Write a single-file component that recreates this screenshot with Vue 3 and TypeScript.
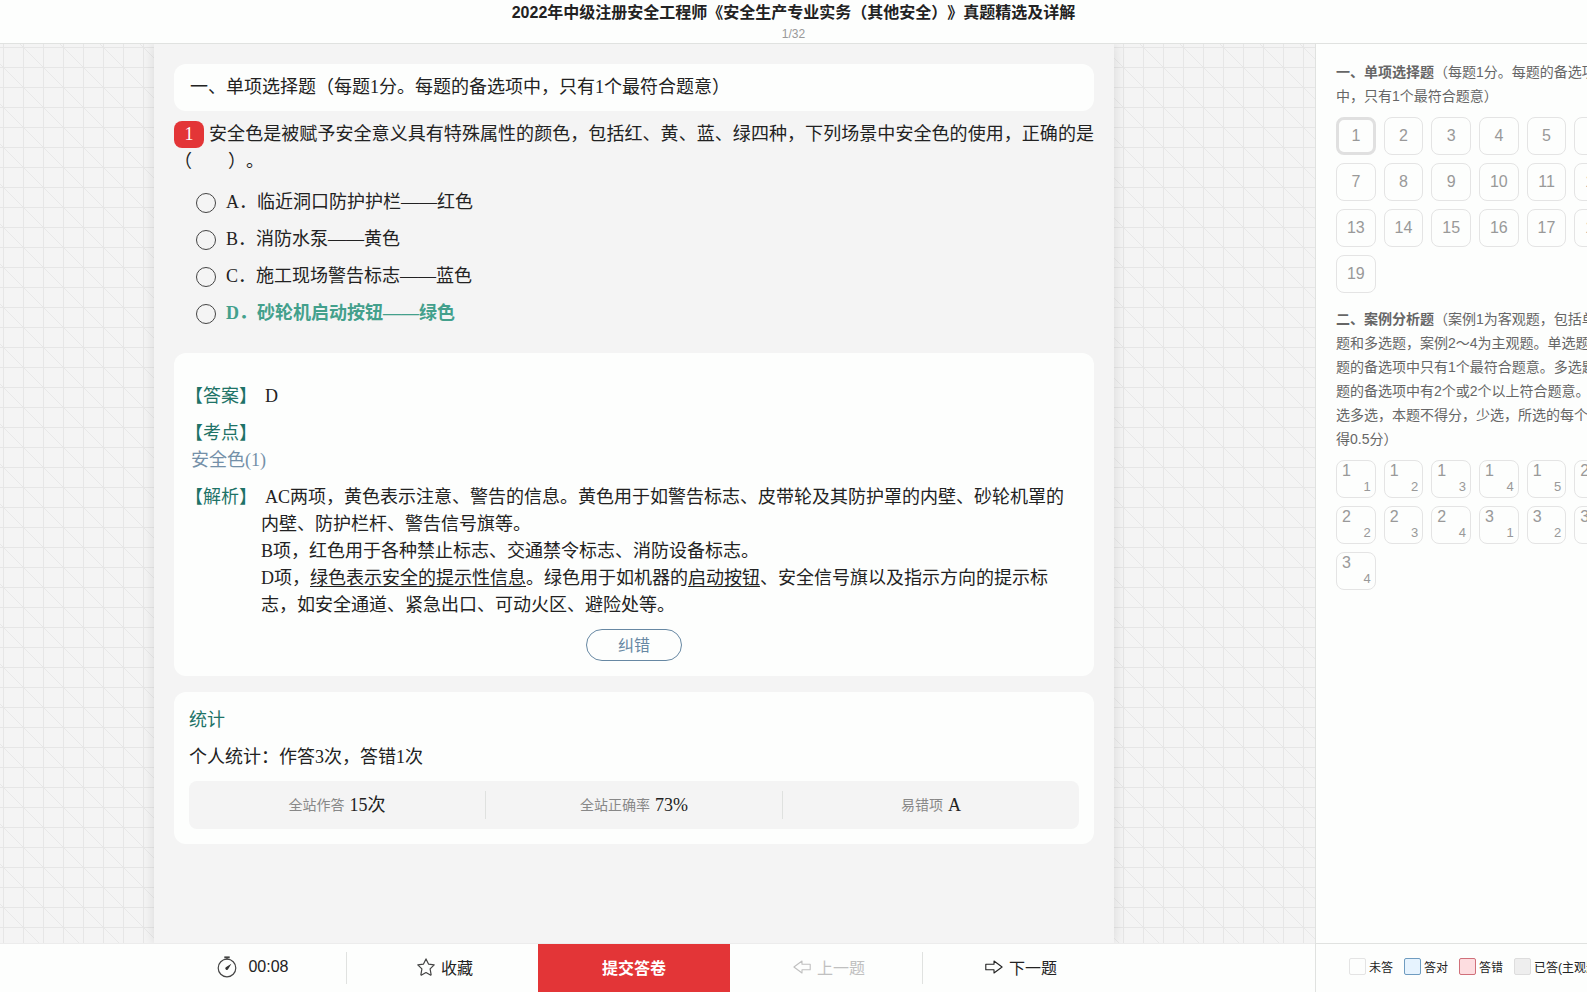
<script setup lang="ts">
import { ref } from 'vue'

interface Option { key: string; text: string; correct: boolean }

const options: Option[] = [
  { key: 'A', text: '临近洞口防护护栏——红色', correct: false },
  { key: 'B', text: '消防水泵——黄色', correct: false },
  { key: 'C', text: '施工现场警告标志——蓝色', correct: false },
  { key: 'D', text: '砂轮机启动按钮——绿色', correct: true },
]
const picked = ref<string>('')

const stats = [
  { label: '全站作答', value: '15次' },
  { label: '全站正确率', value: '73%' },
  { label: '易错项', value: 'A' },
]

const single: number[] = Array.from({ length: 19 }, (_, i) => i + 1)
const current = ref<number>(1)

const cases: [number, number][] = [
  [1, 1], [1, 2], [1, 3], [1, 4], [1, 5], [2, 1],
  [2, 2], [2, 3], [2, 4], [3, 1], [3, 2], [3, 3],
  [3, 4],
]

const legend = [
  { name: '未答', kind: 'none' },
  { name: '答对', kind: 'right' },
  { name: '答错', kind: 'wrong' },
  { name: '已答(主观题)', kind: 'done' },
]
</script>

<template>
  <div class="page">
    <header class="top">
      <h1>2022年中级注册安全工程师《安全生产专业实务（其他安全）》真题精选及详解</h1>
      <span class="progress">1/32</span>
    </header>

    <div class="body">
      <div class="left">
        <div class="canvas">
          <main class="sheet">
            <h2 class="card heading">一、单项选择题（每题1分。每题的备选项中，只有1个最符合题意）</h2>

            <p class="question"><span class="badge">1</span>安全色是被赋予安全意义具有特殊属性的颜色，包括红、黄、蓝、绿四种，下列场景中安全色的使用，正确的是（　　）。</p>

            <div class="options" role="radiogroup" aria-label="选项">
              <label v-for="o in options" :key="o.key" class="option" :class="{ correct: o.correct }">
                <input v-model="picked" type="radio" name="answer" :value="o.key">
                <span>{{ o.key }}．{{ o.text }}</span>
              </label>
            </div>

            <section class="card answer">
              <div class="row"><span class="tag">【答案】</span><span class="first">D</span></div>
              <div class="row"><span class="tag">【考点】</span></div>
              <a class="point" href="#point">安全色(1)</a>
              <div class="row">
                <span class="tag">【解析】</span>
                <div class="explain">
                  <p class="lead">AC两项，黄色表示注意、警告的信息。黄色用于如警告标志、皮带轮及其防护罩的内壁、砂轮机罩的内壁、防护栏杆、警告信号旗等。</p>
                  <p>B项，红色用于各种禁止标志、交通禁令标志、消防设备标志。</p>
                  <p>D项，<u>绿色表示安全的提示性信息</u>。绿色用于如机器的<u>启动按钮</u>、安全信号旗以及指示方向的提示标志，如安全通道、紧急出口、可动火区、避险处等。</p>
                </div>
              </div>
              <button class="fix" type="button">纠错</button>
            </section>

            <section class="card stat">
              <h3>统计</h3>
              <p>个人统计：作答3次，答错1次</p>
              <div class="figures">
                <div v-for="s in stats" :key="s.label" class="figure">
                  <span class="name">{{ s.label }}</span>
                  <span>{{ s.value }}</span>
                </div>
              </div>
            </section>
          </main>
        </div>

        <footer class="bar">
          <div class="actions">
            <div class="action timer">
              <svg width="20" height="22" viewBox="0 0 20 22" fill="none" stroke="#444" stroke-width="1.2">
                <circle cx="10" cy="12" r="8.8" />
                <path d="M7.3 1.4h5.4" stroke-width="2" />
                <path d="M10 1.5v2" />
                <path d="M14.4 7.8 11.2 13a1.5 1.5 0 1 1-2-2z" fill="#333" stroke="none" />
              </svg>
              <span>00:08</span>
            </div>
            <button class="action line" type="button">
              <svg width="18" height="18" viewBox="0 0 18 18" fill="none" stroke="#444" stroke-width="1.2" stroke-linejoin="round">
                <path d="m9 .9 2.5 5.2 5.7.8-4.1 4 1 5.7a.5.5 0 0 1-.7.5L9 14.6l-4.4 2.5a.5.5 0 0 1-.7-.5l1-5.7-4.1-4 5.7-.8z" />
              </svg>
              <span>收藏</span>
            </button>
            <button class="action submit" type="button">提交答卷</button>
            <button class="action" type="button" disabled>
              <svg width="18" height="14" viewBox="0 0 18 14" fill="none" stroke="currentColor" stroke-width="1.1" stroke-linejoin="round">
                <path d="M.9 7 9 1v3.2h8.2v5.6H9V13z" />
              </svg>
              <span>上一题</span>
            </button>
            <button class="action line" type="button">
              <svg width="18" height="14" viewBox="0 0 18 14" fill="none" stroke="currentColor" stroke-width="1.1" stroke-linejoin="round">
                <path d="M17.1 7 9 1v3.2H.8v5.6H9V13z" />
              </svg>
              <span>下一题</span>
            </button>
          </div>
        </footer>
      </div>

      <aside class="side">
        <div class="panel">
          <p class="intro"><b>一、单项选择题</b>（每题1分。每题的备选项中，只有1个最符合题意）</p>
          <div class="grid">
            <button v-for="n in single" :key="n" type="button" class="cell" :class="{ current: n === current }" @click="current = n">{{ n }}</button>
          </div>
          <p class="intro"><b>二、案例分析题</b>（案例1为客观题，包括单选题和多选题，案例2～4为主观题。单选题每题的备选项中只有1个最符合题意。多选题每题的备选项中有2个或2个以上符合题意。错选多选，本题不得分，少选，所选的每个选项得0.5分）</p>
          <div class="grid">
            <button v-for="[a, b] in cases" :key="`${a}-${b}`" type="button" class="cell pair"><span>{{ a }}</span><small>{{ b }}</small></button>
          </div>
        </div>
        <ul class="legend">
          <li v-for="l in legend" :key="l.kind"><i :class="l.kind"></i>{{ l.name }}</li>
        </ul>
      </aside>
    </div>
  </div>
</template>

<style>
html, body { margin: 0; overflow: hidden; }
</style>

<style scoped>
.page {
  --serif: "Liberation Serif", "Noto Sans CJK SC", serif;
  --sans: "Liberation Sans", "Noto Sans CJK SC", sans-serif;
  display: flex;
  flex-direction: column;
  height: 100vh;
  overflow: hidden;
  background: #fdfefd;
  color: #222;
  font-family: var(--sans);
  text-spacing-trim: space-all;
}
.page * { box-sizing: border-box; }
h1, h2, h3, p, ul { margin: 0; padding: 0; font-weight: normal; }
button { margin: 0; padding: 0; border: 0; background: none; color: inherit; font: inherit; cursor: pointer; }

.top {
  flex: none;
  display: flex;
  flex-direction: column;
  align-items: center;
  height: 44px;
  border-bottom: 1px solid #e0e2e0;
}
.top h1 { font-size: 16px; line-height: 26px; font-weight: bold; white-space: nowrap; }
.progress { font-size: 12px; line-height: 16px; color: #999; }

.body { flex: 1; display: flex; min-height: 0; }
.left { flex: 1; display: flex; flex-direction: column; min-width: 0; }
.canvas {
  flex: 1;
  display: flex;
  justify-content: center;
  min-height: 0;
  padding-right: 47px;
  overflow: hidden;
  background-color: #f4f4f4;
  background-image:
    linear-gradient(#e6e6e6 1px, transparent 1px),
    linear-gradient(90deg, #e6e6e6 1px, transparent 1px),
    linear-gradient(45deg, transparent 49%, #e8e8e8 50%, transparent 51%);
  background-size: 20px 20px, 20px 20px, 40px 40px;
  background-position: 3px 3px, 3px 3px, 23px 3px;
}
.sheet {
  width: 100%;
  max-width: 960px;
  padding: 20px;
  background: #f4f4f4;
  box-shadow: 0 0 12px rgba(0, 0, 0, .12);
  font-family: var(--serif);
  font-size: 18px;
  line-height: 27px;
}
.card { border-radius: 12px; background: #fdfefd; }
.heading { padding: 10px 16px; font-size: 18px; line-height: 27px; }

.question { margin-top: 10px; text-align: justify; }
.badge {
  display: inline-block;
  width: 30px;
  margin-right: 5px;
  border-radius: 8px;
  background: #e33537;
  color: #fff;
  text-align: center;
}

.options { display: flex; flex-direction: column; gap: 10px; margin: 14px 0 26px; padding-left: 22px; }
.option { display: flex; align-items: center; gap: 10px; }
.option input {
  appearance: none;
  width: 20px;
  height: 20px;
  margin: 0;
  border: 1px solid #444;
  border-radius: 50%;
}
.option input:checked { background: #43a08c; }
.correct { color: #43a08c; font-weight: bold; }

.answer {
  display: flex;
  flex-direction: column;
  padding: 30px 17px 15px;
}
.row { display: flex; }
.row + .row, .point + .row { margin-top: 10px; }
.tag { flex: none; width: 76px; margin-left: -6px; color: #1e7367; white-space: nowrap; }
.first { padding-left: 4px; }
.point { align-self: flex-start; color: #7490a8; text-decoration: none; }
.explain { flex: 1; }
.lead { text-indent: 4px; }
.explain u { text-underline-offset: 2px; }
.fix {
  align-self: center;
  width: 96px;
  height: 32px;
  margin-top: 10px;
  border: 1px solid #6788a3;
  border-radius: 16px;
  color: #6788a3;
  font-size: 16px;
}

.stat { margin-top: 16px; padding: 15px; }
.stat h3 { color: #1e7367; font-size: 18px; line-height: 27px; }
.stat p { margin: 10px 0; }
.figures { display: flex; padding: 10px 0; border-radius: 8px; background: #f4f4f4; }
.figure { flex: 1; display: flex; justify-content: center; align-items: center; gap: 5px; height: 28px; }
.figure + .figure { border-left: 1px solid #dfe1df; }
.name { color: #888; font-size: 14px; }

.bar { flex: none; display: flex; justify-content: center; padding-right: 47px; border-top: 1px solid #ececec; }
.actions { display: grid; grid-template-columns: repeat(5, 1fr); width: 100%; max-width: 960px; height: 48px; }
.action {
  display: flex;
  align-items: center;
  justify-content: center;
  gap: 6px;
  padding: 0 0 2px 6px;
  font-size: 16px;
}
.timer { gap: 11px; }
.line { background: linear-gradient(#e0e2e0, #e0e2e0) 0 8px / 1px 32px no-repeat; }
.submit { padding-left: 0; background: #e33537; color: #fff; font-weight: bold; }
.action:disabled { color: #c0c0c0; cursor: default; }

.side {
  flex: none;
  display: flex;
  flex-direction: column;
  width: 272px;
  overflow: hidden;
  border-left: 1px solid #e0e2e0;
}
.panel { flex: 1; width: 320px; padding: 16px 20px; min-height: 0; }
.intro { color: #666; font-size: 14px; line-height: 24px; }
.grid {
  display: grid;
  grid-template-columns: repeat(6, 1fr);
  gap: 8px;
  margin: 9px 0 14px;
  padding-right: 2px;
}
.cell {
  height: 38px;
  border: 1px solid #e4e4e4;
  border-radius: 8px;
  color: #999;
  font-size: 16px;
}
.current { border: 3px solid #e0e0e0; }
.pair {
  display: flex;
  flex-direction: column;
  justify-content: space-between;
  padding: 2px 4px 2px 5px;
  line-height: 16px;
}
.pair span { align-self: flex-start; }
.pair small { align-self: flex-end; font-size: 13px; }

.legend {
  flex: none;
  display: flex;
  align-items: center;
  gap: 11px;
  height: 49px;
  padding: 0 0 3px 33px;
  border-top: 1px solid #e0e2e0;
  list-style: none;
  font-size: 12px;
  white-space: nowrap;
}
.legend li { display: flex; align-items: center; gap: 3px; }
.legend i { width: 17px; height: 17px; border: 1px solid #e4e4e4; border-radius: 2px; }
.legend .right { border-color: #6f9cc0; background: #e6f3fe; }
.legend .wrong { border-color: #d0707a; background: #fddde0; }
.legend .done { border-color: #ddd; background: #eee; }
</style>
